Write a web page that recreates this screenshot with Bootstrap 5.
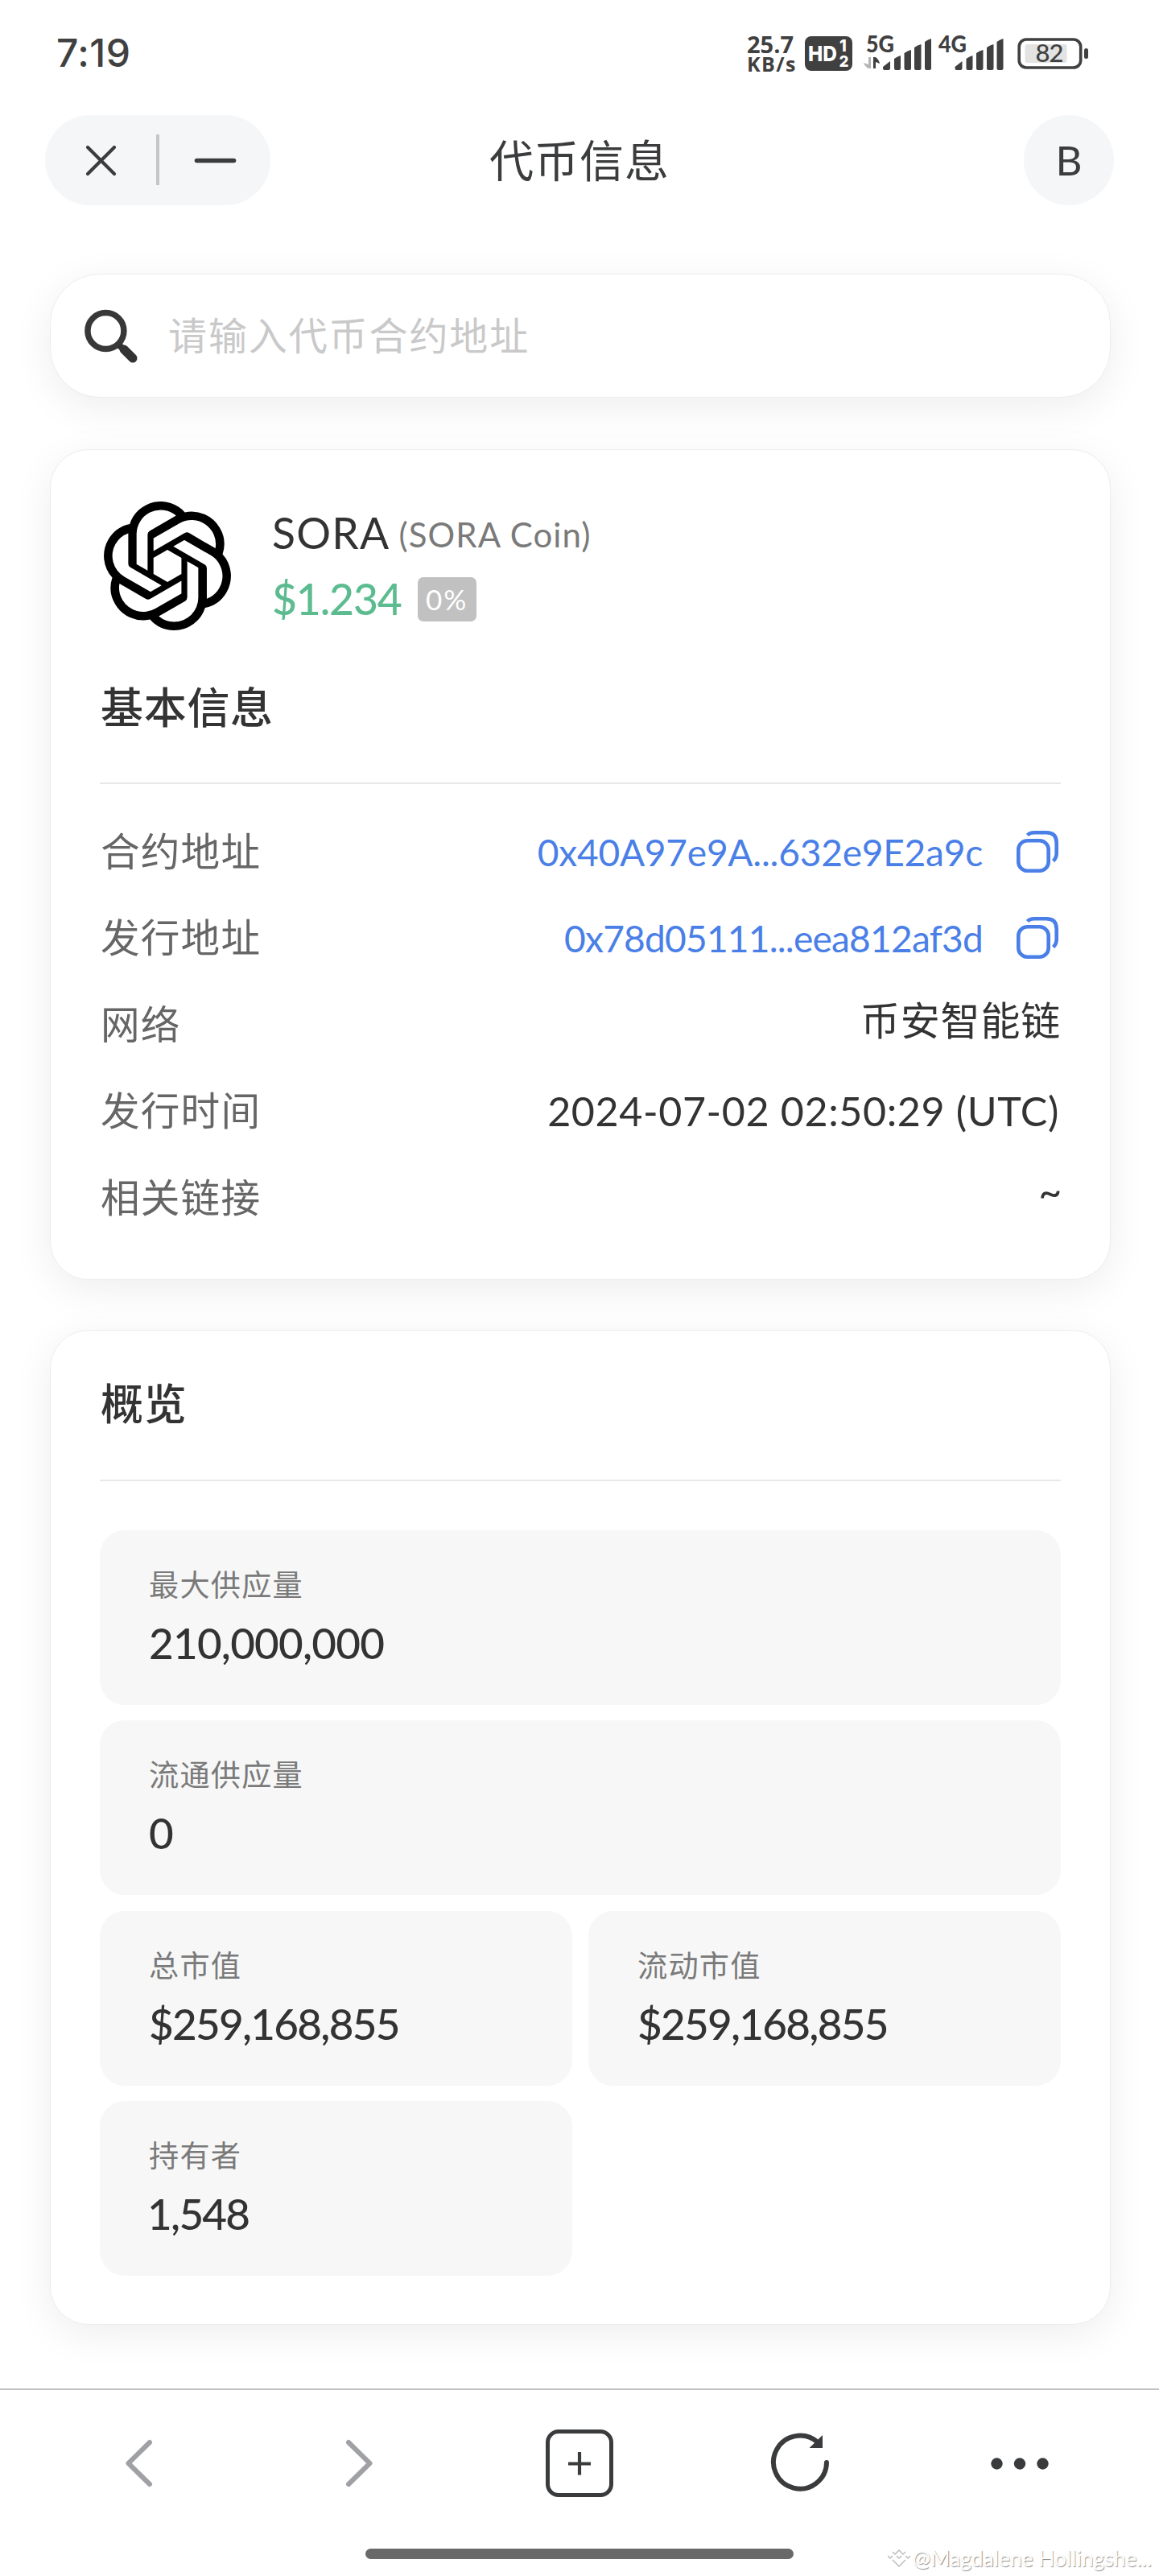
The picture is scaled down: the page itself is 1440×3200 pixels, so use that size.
<!DOCTYPE html>
<html lang="zh-CN">
<head>
<meta charset="utf-8">
<meta name="viewport" content="width=device-width, initial-scale=1">
<title>代币信息</title>
<link href="https://cdn.jsdelivr.net/npm/bootstrap@5.3.0/dist/css/bootstrap.min.css" rel="stylesheet">
<style>
  body { width: 1440px; height: 3200px; overflow: hidden; background: #fff; color: #333; font-family: Lato, "Noto Sans CJK SC", sans-serif; }
  svg { display: block; flex: none; }
  .zh { font-family: "Noto Sans CJK SC", sans-serif; }
  .app { height: 3200px; }

  .status { height: 132px; padding: 0 88px 0 70px; color: #404040; }
  .clock { font: 500 48px/60px Inter, sans-serif; letter-spacing: .5px; }
  .speed { font: 700 29px/25px "Open Sans", sans-serif; width: 61px; margin-right: 11px; padding-top: 2px; }
  .speed .unit { font-size: 25px; letter-spacing: 1.4px; }

  .titlebar { height: 112px; margin-top: 11px; padding: 0 56px; color: #3b3c3d; }
  .capsule { width: 280px; height: 112px; border-radius: 56px; background: #f5f6f8; }
  .page-title { font-size: 55px; line-height: 106px; letter-spacing: 1px; }
  .side { width: 280px; }
  .avatar { width: 112px; height: 112px; background: #f5f6f8; font: 400 51px/112px Lato, sans-serif; text-align: center; }

  .panel { margin: 0 60px 0 62px; border: 1px solid #ededed; background: #fff; box-shadow: 0 12px 50px rgba(0,0,0,.07); }
  .search { height: 154px; margin-top: 85px; border-radius: 62px; padding-left: 42px; }
  .search .hint { font-size: 48px; letter-spacing: 1.9px; line-height: 80px; padding-bottom: 7px; color: #c9c9c9; margin-left: 38px; }
  .info { height: 1032px; margin-top: 64px; border-radius: 48px; padding: 64px 61px 0; }
  .overview { height: 1236px; margin-top: 62px; border-radius: 48px; padding: 58px 61px 0; }

  .coin-text { margin: -2px 0 0 50px; }
  .line { height: 81px; }
  .symbol { font-size: 53.5px; letter-spacing: 1.2px; line-height: 81px; }
  .fullname { font-size: 42px; letter-spacing: 1.1px; line-height: 78px; color: #7a7a7a; margin-left: 11px; position: relative; top: -2px; }
  .price { font-size: 53.5px; font-weight: 500; letter-spacing: -1.2px; line-height: 81px; color: #5cbc90; padding-top: 2px; }
  .change { width: 73px; height: 55px; margin: 3px 0 0 20px; border-radius: 7px; background: #c1c1c1; color: #fff; font-size: 35px; letter-spacing: 2px; line-height: 55px; text-align: center; }

  .heading { font-size: 53px; letter-spacing: .7px; line-height: 60px; font-weight: 500; margin: 0; padding-left: 1px; }
  .rule { height: 2px; background: #e8e8e8; }
  .item { height: 107.5px; padding: 0 2px 0 1px; }
  .item .key { font-size: 48.6px; letter-spacing: 1.2px; line-height: 60px; color: #666; }
  .addr { font-size: 46.1px; letter-spacing: -.25px; line-height: 60px; color: #4a7fe8; }
  .item .latin { padding-top: 6px; }
  .chain { font-size: 49px; letter-spacing: .8px; line-height: 60px; padding-bottom: 9px; margin-right: -2px; }
  .date { font-size: 50.2px; letter-spacing: .6px; line-height: 60px; }
  .tilde { padding-bottom: 10px; margin-right: -4px; }
  .copy { margin-left: 41px; }

  .tiles { --bs-gutter-x: 20px; --bs-gutter-y: 19.2px; margin-top: 42px; }
  .tile { height: 217px; border-radius: 31px; background: #f7f7f7; padding: 41px 0 0 61px; }
  .tile .key { font-size: 37.2px; letter-spacing: 1.2px; line-height: 50px; color: #7a7a7a; }
  .tile .val { font-size: 53px; font-weight: 500; line-height: 60px; margin-top: 19px; letter-spacing: -1.75px; }

  .toolbar { position: relative; margin-top: 79px; height: 233px; border-top: 2px solid #c0c2c2; background: #fff; }
  .tools { height: 181px; padding: 0 36px; }
  .home { width: 532px; height: 13px; margin: 16px auto 0; border-radius: 7px; background: #696969; }
  .watermark { position: absolute; left: 1103px; top: 190px; height: 38px; color: #fff; font: 400 26.4px/38px Lato, sans-serif; text-shadow: .8px .8px 1px rgba(0,0,0,.45); white-space: nowrap; }
</style>
</head>
<body>
<div class="app d-flex flex-column">

  <header class="status d-flex align-items-center">
    <div class="clock me-auto">7:19</div>
    <div class="speed text-nowrap"><div>25.7</div><div class="unit">KB/s</div></div>
    <svg width="59" height="56" viewBox="1001 38 59 56">
      <rect x="1001" y="45" width="59" height="43" rx="8" fill="#404040"/>
      <g fill="#fff" font-family="Inter" font-weight="800">
        <text x="1005" y="76" font-size="26" textLength="36" lengthAdjust="spacingAndGlyphs">HD</text>
        <text x="1044" y="64" font-size="20">1</text>
        <text x="1043.5" y="83" font-size="19" textLength="12" lengthAdjust="spacingAndGlyphs">2</text>
      </g>
    </svg>
    <svg style="margin-left:14px" width="84" height="56" viewBox="1074 38 84 56" fill="#404040">
      <text x="1077" y="64.500" font-family="Lato" font-weight="900" font-size="27.500" textLength="35" lengthAdjust="spacingAndGlyphs">5G</text>
      <path d="M1080 71h3v14h-3q-5-3-6-7l6 2z" fill="#b5b5b5"/>
      <path d="M1086 71h3q4 3 5 8l-5-2v8h-3z"/>
      <path d="M1098 83l9-7v9q0 2-2 2h-5q-2 0-2-2zM1112 73q4-3 8-4v16q0 2-2 2h-4q-2 0-2-2zM1124.500 66q4-3 8.500-4v23q0 2-2 2h-4.500q-2 0-2-2zM1137 59q4-3 8.500-4v30q0 2-2 2h-4.500q-2 0-2-2zM1150 52q4-3 8-4v37q0 2-2 2h-4q-2 0-2-2z"/>
    </svg>
    <svg class="ms-2" width="82" height="56" viewBox="1165.500 38 82 56" fill="#404040">
      <text x="1166.500" y="64.500" font-family="Lato" font-weight="900" font-size="27.500" textLength="35" lengthAdjust="spacingAndGlyphs">4G</text>
      <path d="M1187 83l9-7v9q0 2-2 2h-5q-2 0-2-2zM1201 73q4-3 8-4v16q0 2-2 2h-4q-2 0-2-2zM1213.500 66q4-3 8.500-4v23q0 2-2 2h-4.500q-2 0-2-2zM1226.500 59q4-3 8.500-4v30q0 2-2 2h-4.500q-2 0-2-2zM1239 52q4-3 8-4v37q0 2-2 2h-4q-2 0-2-2z"/>
    </svg>
    <svg style="margin-left:17px" width="88" height="56" viewBox="1264.500 38 88 56">
      <rect x="1266.700" y="49" width="76.500" height="35" rx="9" fill="#fff" stroke="#404040" stroke-width="3.600"/>
      <rect x="1274" y="55" width="52" height="23" rx="3" fill="#e3e3e3"/>
      <rect x="1347.500" y="60" width="5" height="13" rx="2.500" fill="#404040"/>
      <text x="1287" y="77" font-family="Lato" font-weight="500" font-size="31" fill="#404040" textLength="35">82</text>
    </svg>
  </header>

  <nav class="titlebar d-flex justify-content-between">
    <div class="capsule">
      <svg width="280" height="112" viewBox="0 0 280 112" fill="none" stroke="#3b3c3d" stroke-linecap="round">
        <path d="M53 40L86 73M86 40L53 73" stroke-width="4.200"/>
        <path d="M140 24v63" stroke="#c3c5c6" stroke-width="4" stroke-linecap="butt"/>
        <path d="M188.500 56.500h46" stroke-width="5.600"/>
      </svg>
    </div>
    <div class="page-title zh">代币信息</div>
    <div class="side d-flex justify-content-end"><div class="avatar rounded-circle">B</div></div>
  </nav>

  <div class="panel search d-flex align-items-center">
    <svg width="66" height="68" viewBox="105 381 66 68" fill="none">
      <circle cx="131.400" cy="409" r="22.500" stroke="#383838" stroke-width="7.500"/>
      <path d="M148 427l6 5" stroke="#333" stroke-width="8"/>
      <path d="M154 432l11 11" stroke="#333" stroke-width="11" stroke-linecap="round"/>
    </svg>
    <div class="hint zh">请输入代币合约地址</div>
  </div>

  <section class="panel info">
    <div class="d-flex">
      <svg style="margin-left:4px" width="160" height="160" viewBox="0 0 24 24"><path d="M22.2819 9.8211a5.9847 5.9847 0 0 0-.5157-4.9108 6.0462 6.0462 0 0 0-6.5098-2.9A6.0651 6.0651 0 0 0 4.9807 4.1818a5.9847 5.9847 0 0 0-3.9977 2.9 6.0462 6.0462 0 0 0 .7427 7.0966 5.98 5.98 0 0 0 .511 4.9107 6.051 6.051 0 0 0 6.5146 2.9001A5.9847 5.9847 0 0 0 13.2599 24a6.0557 6.0557 0 0 0 5.7718-4.2058 5.9894 5.9894 0 0 0 3.9977-2.9001 6.0557 6.0557 0 0 0-.7475-7.0729zm-9.022 12.6081a4.4755 4.4755 0 0 1-2.8764-1.0408l.1419-.0804 4.7783-2.7582a.7948.7948 0 0 0 .3927-.6813v-6.7369l2.02 1.1686a.071.071 0 0 1 .038.052v5.5826a4.504 4.504 0 0 1-4.4945 4.4944zm-9.6607-4.1254a4.4708 4.4708 0 0 1-.5346-3.0137l.142.0852 4.783 2.7582a.7712.7712 0 0 0 .7806 0l5.8428-3.3685v2.3324a.0804.0804 0 0 1-.0332.0615L9.74 19.9502a4.4992 4.4992 0 0 1-6.1408-1.6464zM2.3408 7.8956a4.485 4.485 0 0 1 2.3655-1.9728V11.6a.7664.7664 0 0 0 .3879.6765l5.8144 3.3543-2.0201 1.1685a.0757.0757 0 0 1-.071 0l-4.8303-2.7865A4.504 4.504 0 0 1 2.3408 7.872zm16.5963 3.8558L13.1038 8.364 15.1192 7.2a.0757.0757 0 0 1 .071 0l4.8303 2.7913a4.4944 4.4944 0 0 1-.6765 8.1042v-5.6772a.79.79 0 0 0-.407-.667zm2.0107-3.0231l-.142-.0852-4.7735-2.7818a.7759.7759 0 0 0-.7854 0L9.409 9.2297V6.8974a.0662.0662 0 0 1 .0284-.0615l4.8303-2.7866a4.4992 4.4992 0 0 1 6.6802 4.66zM8.3065 12.863l-2.02-1.1638a.0804.0804 0 0 1-.038-.0567V6.0742a4.4992 4.4992 0 0 1 7.3757-3.4537l-.142.0805L8.704 5.459a.7948.7948 0 0 0-.3927.6813zm1.0976-2.3654l2.602-1.4998 2.6069 1.4998v2.9994l-2.5974 1.4997-2.6067-1.4997Z" fill="#000"/></svg>
      <div class="coin-text">
        <div class="line d-flex align-items-baseline"><span class="symbol">SORA</span><span class="fullname">(SORA Coin)</span></div>
        <div class="line d-flex align-items-center"><span class="price">$1.234</span><span class="change">0%</span></div>
      </div>
    </div>
    <h2 class="heading zh" style="margin-top:63px">基本信息</h2>
    <div class="rule" style="margin-top:66px"></div>
    <div style="margin-top:27px">
      <div class="item d-flex justify-content-between align-items-center"><span class="key zh">合约地址</span>
        <span class="latin d-flex align-items-center"><span class="addr">0x40A97e9A...632e9E2a9c</span>
        <svg class="copy" width="54" height="54" viewBox="0 0 54 54" fill="none" stroke="#4a7fe8" stroke-width="4.600" stroke-linecap="butt"><rect x="3.300" y="13.300" width="37.400" height="37.400" rx="11"/><path d="M14.500 6.500Q17.500 3.300 23 3.300H38Q50.700 3.300 50.700 16V29Q50.700 35 46.500 38.500"/></svg></span></div>
      <div class="item d-flex justify-content-between align-items-center"><span class="key zh">发行地址</span>
        <span class="latin d-flex align-items-center"><span class="addr" style="letter-spacing:-.8px">0x78d05111...eea812af3d</span>
        <svg class="copy" width="54" height="54" viewBox="0 0 54 54" fill="none" stroke="#4a7fe8" stroke-width="4.600" stroke-linecap="butt"><rect x="3.300" y="13.300" width="37.400" height="37.400" rx="11"/><path d="M14.500 6.500Q17.500 3.300 23 3.300H38Q50.700 3.300 50.700 16V29Q50.700 35 46.500 38.500"/></svg></span></div>
      <div class="item d-flex justify-content-between align-items-center"><span class="key zh">网络</span><span class="chain zh">币安智能链</span></div>
      <div class="item d-flex justify-content-between align-items-center"><span class="key zh">发行时间</span><span class="date latin">2024-07-02 02:50:29 (UTC)</span></div>
      <div class="item d-flex justify-content-between align-items-center"><span class="key zh">相关链接</span><span class="date tilde">~</span></div>
    </div>
  </section>

  <section class="panel overview">
    <h2 class="heading zh">概览</h2>
    <div class="rule" style="margin-top:67px"></div>
    <div class="tiles row">
      <div class="col-12"><div class="tile"><div class="key zh">最大供应量</div><div class="val" style="letter-spacing:-.8px">210,000,000</div></div></div>
      <div class="col-12"><div class="tile"><div class="key zh">流通供应量</div><div class="val">0</div></div></div>
      <div class="col-6"><div class="tile"><div class="key zh">总市值</div><div class="val">$259,168,855</div></div></div>
      <div class="col-6"><div class="tile"><div class="key zh">流动市值</div><div class="val">$259,168,855</div></div></div>
      <div class="col-6"><div class="tile"><div class="key zh">持有者</div><div class="val" style="text-indent:-2px">1,548</div></div></div>
    </div>
  </section>

  <footer class="toolbar">
    <div class="tools row gx-0 align-items-center">
      <div class="col d-flex justify-content-center"><svg width="90" height="90" viewBox="-45 -45 90 90" fill="none" stroke="#a0a1a4" stroke-width="6" stroke-linecap="round" stroke-linejoin="round"><path d="M13-26L-13.500 0L13 26"/></svg></div>
      <div class="col d-flex justify-content-center"><svg width="90" height="90" viewBox="-45 -45 90 90" fill="none" stroke="#a0a1a4" stroke-width="6" stroke-linecap="round" stroke-linejoin="round"><path d="M-13-26L13.500 0L-13 26"/></svg></div>
      <div class="col d-flex justify-content-center"><svg width="90" height="90" viewBox="-45 -45 90 90" fill="none" stroke="#3a3b3d"><rect x="-39.500" y="-39.500" width="79" height="79" rx="13.500" stroke-width="5"/><path d="M-14 .5H14M0-14V14.500" stroke-width="4.200"/></svg></div>
      <div class="col d-flex justify-content-center"><svg width="90" height="90" viewBox="-45 -45 90 90" fill="none" stroke="#3a3b3d" stroke-width="6"><path d="M33-1A33 33 0 1 1 22-26" stroke-linecap="round"/><path d="M28-35V-19H11.500z" fill="#3a3b3d" stroke="none"/></svg></div>
      <div class="col d-flex justify-content-center"><svg width="90" height="90" viewBox="-45 -45 90 90" fill="#3a3b3d"><circle cx="-28.500" cy=".5" r="7.200"/><circle cy=".5" r="7.200"/><circle cx="28.500" cy=".5" r="7.200"/></svg></div>
    </div>
    <div class="home"></div>
    <div class="watermark d-flex align-items-center">
      <svg width="28" height="26" viewBox="0 0 28 26" fill="none" stroke="#b9b9b9" stroke-width="1.300"><path d="M6 5l3 3 5-5 5 5 3-3M0 10l3 3 3-3M11 10l3 3 3-3M22 10l3 3 3-3M6 15l8 8 8-8"/></svg>
      <span style="margin-left:3px">@Magdalene Hollingshe...</span>
    </div>
  </footer>
</div>
<script src="https://cdn.jsdelivr.net/npm/bootstrap@5.3.0/dist/js/bootstrap.bundle.min.js"></script>
</body>
</html>
